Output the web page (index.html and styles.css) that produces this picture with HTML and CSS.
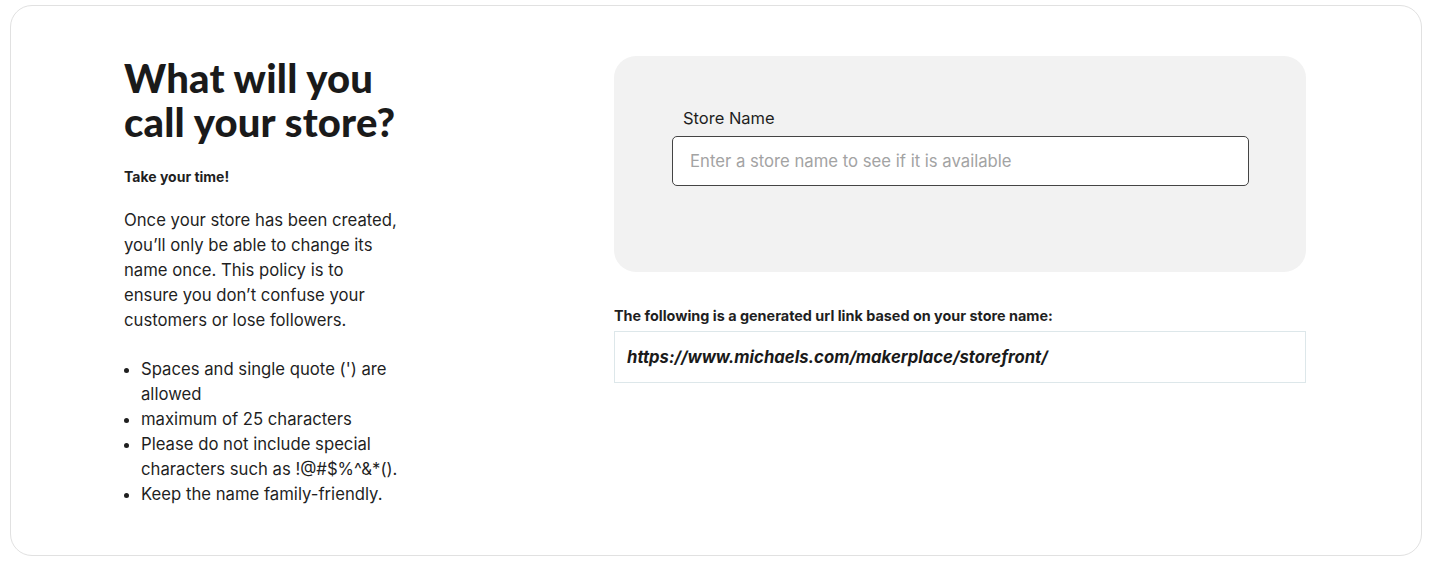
FILE: index.html
```html
<!DOCTYPE html>
<html lang="en">
<head>
<meta charset="utf-8">
<title>Store name</title>
<link rel="stylesheet" href="styles.css">
</head>
<body>
<div class="page">
  <section class="card">
    <div class="intro">
      <h1 class="title">What will you call your store?</h1>
      <p class="lead">Take your time!</p>
      <p class="text">Once your store has been created, you’ll only be able to change its name once. This policy is to ensure you don’t confuse your customers or lose followers.</p>
      <ul class="rules">
        <li>Spaces and single quote (') are allowed</li>
        <li>maximum of 25 characters</li>
        <li>Please do not include special characters such as !@#$%^&amp;*().</li>
        <li>Keep the name family-friendly.</li>
      </ul>
    </div>
    <div class="form">
      <div class="name-box">
        <label class="label" for="store">Store Name</label>
        <input class="input" id="store" type="text" placeholder="Enter a store name to see if it is available">
      </div>
      <p class="url-label">The following is a generated url link based on your store name:</p>
      <div class="url-box">https://www.michaels.com/makerplace/storefront/</div>
    </div>
  </section>
</div>
</body>
</html>
```

FILE: styles.css
```css
* { box-sizing: border-box; }
html, body { margin: 0; padding: 0; background: #fff; }
body {
  font-family: Inter, "Liberation Sans", Arial, sans-serif;
  color: #1f1f1f;
}
.page {
  padding: 5px 18px 22px 10px;
}
.card {
  height: 551px;
  border: 1px solid #e1e1e1;
  border-radius: 22px;
  padding: 50px 115px 0 113px;
  display: grid;
  grid-template-columns: 290px 692px;
  column-gap: 200px;
  align-items: start;
}
.intro { width: 275px; }
.title {
  margin: 0;
  width: 290px;
  font-family: Lato, Inter, sans-serif;
  font-weight: 900;
  font-size: 40px;
  line-height: 44px;
  color: #1a1a1a;
  letter-spacing: 0.2px;
}
.lead {
  margin: 23px 0 0;
  font-size: 14px;
  font-weight: 700;
  line-height: 20px;
}
.text {
  margin: 21px 0 0;
  font-size: 16.7px;
  line-height: 25px;
}
.rules {
  margin: 24px 0 0;
  padding-left: 17px;
  font-size: 16.7px;
  line-height: 25px;
}
.form { display: flex; flex-direction: column; }
.name-box {
  background: #f2f2f2;
  border-radius: 22px;
  height: 216px;
  padding: 50px 57px 0 58px;
  display: flex;
  flex-direction: column;
}
.label {
  padding-left: 11px;
  font-size: 16.5px;
  line-height: 24px;
  margin-bottom: 6px;
  color: #1f1f1f;
}
.input {
  height: 50px;
  border: 1px solid #444;
  border-radius: 5px;
  padding: 0 17px;
  font-family: inherit;
  font-size: 16.7px;
  color: #1f1f1f;
  background: #fff;
  outline: none;
}
.input::placeholder { color: #a3a3a3; }
.url-label {
  margin: 34px 0 5px;
  font-size: 14.4px;
  font-weight: 700;
  line-height: 20px;
}
.url-box {
  height: 52px;
  border: 1px solid #dde7ea;
  padding: 0 12px;
  display: flex;
  align-items: center;
  font-size: 16.7px;
  font-weight: 700;
  font-style: italic;
  color: #1a1a1a;
}
```
